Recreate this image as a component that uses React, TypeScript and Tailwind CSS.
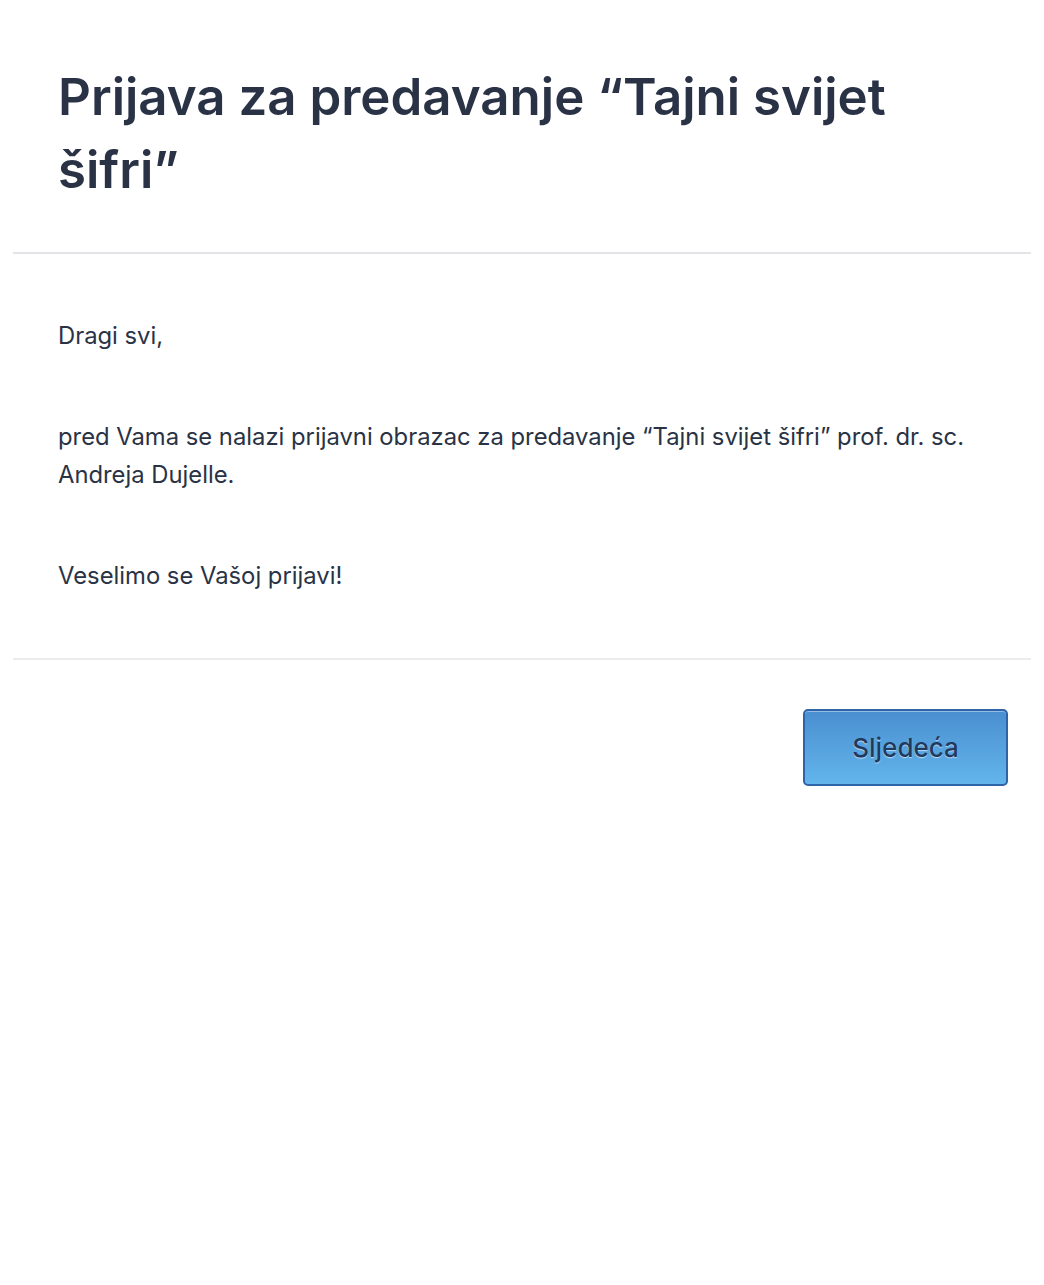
import React from "react";

export default function App() {
  return (
    <div className="min-h-[1285px] bg-white px-[13px] text-[#2a3346]" style={{ fontFamily: "Inter, 'Noto Sans', sans-serif" }}>
      <div className="px-[45px] pt-[60px] pb-[46px]">
        <h1 className="text-[51px] font-semibold leading-[73px]">
          Prijava za predavanje “Tajni svijet šifri”
        </h1>
      </div>
      <div className="border-t-2 border-[#e3e4e8]" />
      <div className="flex flex-col gap-[63px] px-[45px] pt-[63px] pb-[63px] text-[23.8px] leading-[38px]">
        <p>Dragi svi,</p>
        <p>
          pred Vama se nalazi prijavni obrazac za predavanje “Tajni svijet šifri” prof. dr. sc. Andreja Dujelle.
        </p>
        <p>Veselimo se Vašoj prijavi!</p>
      </div>
      <div className="border-t-2 border-[#ececef]" />
      <div className="flex justify-end pr-[23px] pt-[49px]">
        <button
          className="h-[77px] w-[205px] rounded-[5px] border-2 border-[#2f64a8] bg-gradient-to-b from-[#4a8fd0] to-[#63b5ec] text-[26px] font-medium text-[#1f3a5e] [text-shadow:0_1px_1px_rgba(255,255,255,0.6)] shadow-[inset_0_1px_0_rgba(255,255,255,0.4)]"
        >
          Sljedeća
        </button>
      </div>
    </div>
  );
}
